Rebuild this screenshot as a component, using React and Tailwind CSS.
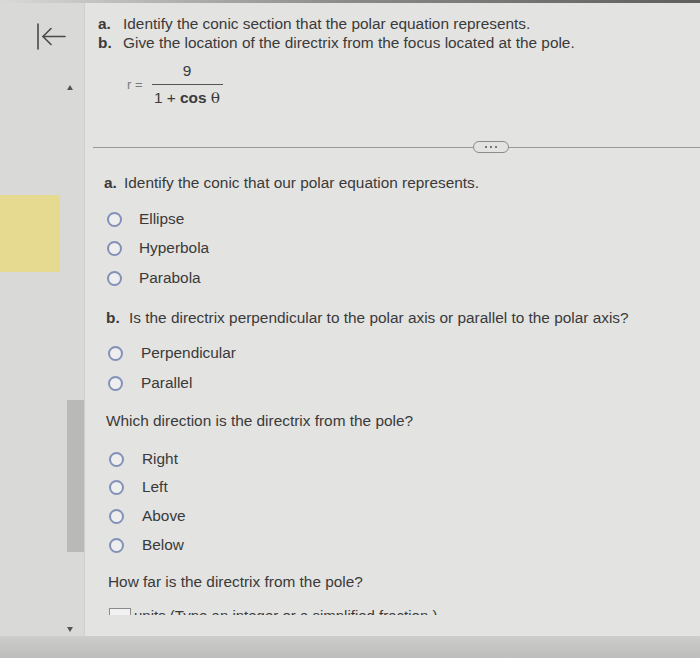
import React from 'react';

const font = { fontFamily: '"Liberation Sans", Arial, sans-serif' };

const Radio = ({ label, gap }) => (
  <div className="flex items-center h-[20px]">
    <span className="w-[15px] h-[15px] rounded-full border-2 border-[#8391b8] bg-[#eeeeee] shrink-0" />
    <span className={`${gap} text-[15.4px] text-[#3a3a3a]`}>{label}</span>
  </div>
);

const BackIcon = () => (
  <svg width="30" height="28" viewBox="0 0 30 28" fill="none" stroke="#4a4a4a" strokeWidth="1.6" strokeLinecap="round">
    <path d="M2 1v25" />
    <path d="M7 13.5h22" />
    <path d="M15 5.5l-8 8 8 8" />
  </svg>
);

export default function App() {
  return (
    <div className="w-[700px] h-[658px] flex flex-col bg-[#d9d9d7] overflow-hidden" style={font}>
      <div className="h-[3px] bg-gradient-to-r from-[#d9d9d7] via-[#8a8a8a] to-[#5f5f5f]" />
      <div className="flex flex-1">
        {/* left gutter */}
        <div className="w-[62px] flex flex-col">
          <div className="mt-[20px] ml-[36px]">
            <BackIcon />
          </div>
          <div className="mt-[144px] h-[77px] w-[60px] bg-[#e6da90]" />
        </div>

        {/* scrollbar */}
        <div className="w-[22px] flex flex-col items-center">
          <div className="mt-[82px] mr-[6px] w-0 h-0 border-l-[3px] border-r-[3px] border-b-[5px] border-l-transparent border-r-transparent border-b-[#555]" />
          <div className="mt-[310px] ml-[4px] w-[17px] h-[152px] bg-[#b9b9b7]" />
          <div className="mt-[75px] mr-[6px] w-0 h-0 border-l-[3px] border-r-[3px] border-t-[5px] border-l-transparent border-r-transparent border-t-[#555]" />
        </div>

        {/* main panel */}
        <div className="flex-1 flex flex-col bg-[#e3e3e1] border-l border-[#cfcfcd]">
          <div className="h-[612px] overflow-hidden text-[15.4px] text-[#3a3a3a]">
            <div className="pt-[11px] pl-[13px] leading-[19px]">
              <div><span className="inline-block w-[25px] font-bold">a.</span>Identify the conic section that the polar equation represents.</div>
              <div><span className="inline-block w-[25px] font-bold">b.</span>Give the location of the directrix from the focus located at the pole.</div>
            </div>

            <div className="mt-[10px] ml-[42px] flex items-center">
              <span className="text-[13px] text-[#7a7a7a] mr-[8px]">r =</span>
              <div className="flex flex-col items-center w-[71px] ml-[1px]">
                <span className="leading-[18px]">9</span>
                <span className="w-full h-px bg-[#555] my-[4px]" />
                <span className="leading-[18px]">1 + <b>cos</b> <span style={{ fontFamily: '"DejaVu Serif", serif' }}>θ</span></span>
              </div>
            </div>

            <div className="mt-[34px] ml-[8px] h-[12px] flex items-center">
              <div className="w-[380px] h-px bg-[#9a9a9a]" />
              <div className="w-[36px] h-[12px] rounded-full border border-[#8a8a8a] flex items-center justify-center gap-[3px]">
                <span className="w-[2px] h-[2px] bg-[#555] rounded-full" />
                <span className="w-[2px] h-[2px] bg-[#555] rounded-full" />
                <span className="w-[2px] h-[2px] bg-[#555] rounded-full" />
              </div>
              <div className="flex-1 h-px bg-[#9a9a9a]" />
            </div>

            <div className="mt-[20px] ml-[19px] h-[20px] flex items-center">
              <span className="inline-block w-[20px] font-bold">a.</span>Identify the conic that our polar equation represents.
            </div>
            <div className="ml-[22px]">
              <div className="mt-[16px]"><Radio label="Ellipse" gap="ml-[17px]" /></div>
              <div className="mt-[9px]"><Radio label="Hyperbola" gap="ml-[17px]" /></div>
              <div className="mt-[10px]"><Radio label="Parabola" gap="ml-[17px]" /></div>
            </div>

            <div className="mt-[20px] ml-[21px] h-[20px] flex items-center">
              <span className="inline-block w-[23px] font-bold">b.</span>Is the directrix perpendicular to the polar axis or parallel to the polar axis?
            </div>
            <div className="ml-[23px]">
              <div className="mt-[15px]"><Radio label="Perpendicular" gap="ml-[18px]" /></div>
              <div className="mt-[10px]"><Radio label="Parallel" gap="ml-[18px]" /></div>
            </div>

            <div className="mt-[18px] ml-[21px] h-[20px] flex items-center">Which direction is the directrix from the pole?</div>
            <div className="ml-[24px]">
              <div className="mt-[18px]"><Radio label="Right" gap="ml-[18px]" /></div>
              <div className="mt-[8px]"><Radio label="Left" gap="ml-[18px]" /></div>
              <div className="mt-[9px]"><Radio label="Above" gap="ml-[18px]" /></div>
              <div className="mt-[9px]"><Radio label="Below" gap="ml-[18px]" /></div>
            </div>

            <div className="mt-[17px] ml-[23px] h-[20px] flex items-center">How far is the directrix from the pole?</div>
            <div className="mt-[16px] ml-[24px] flex items-start">
              <span className="w-[22px] h-[22px] border border-[#8a8a8a] bg-[#f2f2f2]" />
              <span className="ml-[3px] leading-[16px] text-[15px]">units (Type an integer or a simplified fraction.)</span>
            </div>
          </div>
        </div>
      </div>
      <div className="h-[22px] bg-gradient-to-b from-[#cdcdcb] to-[#bdbdbb]" />
    </div>
  );
}
